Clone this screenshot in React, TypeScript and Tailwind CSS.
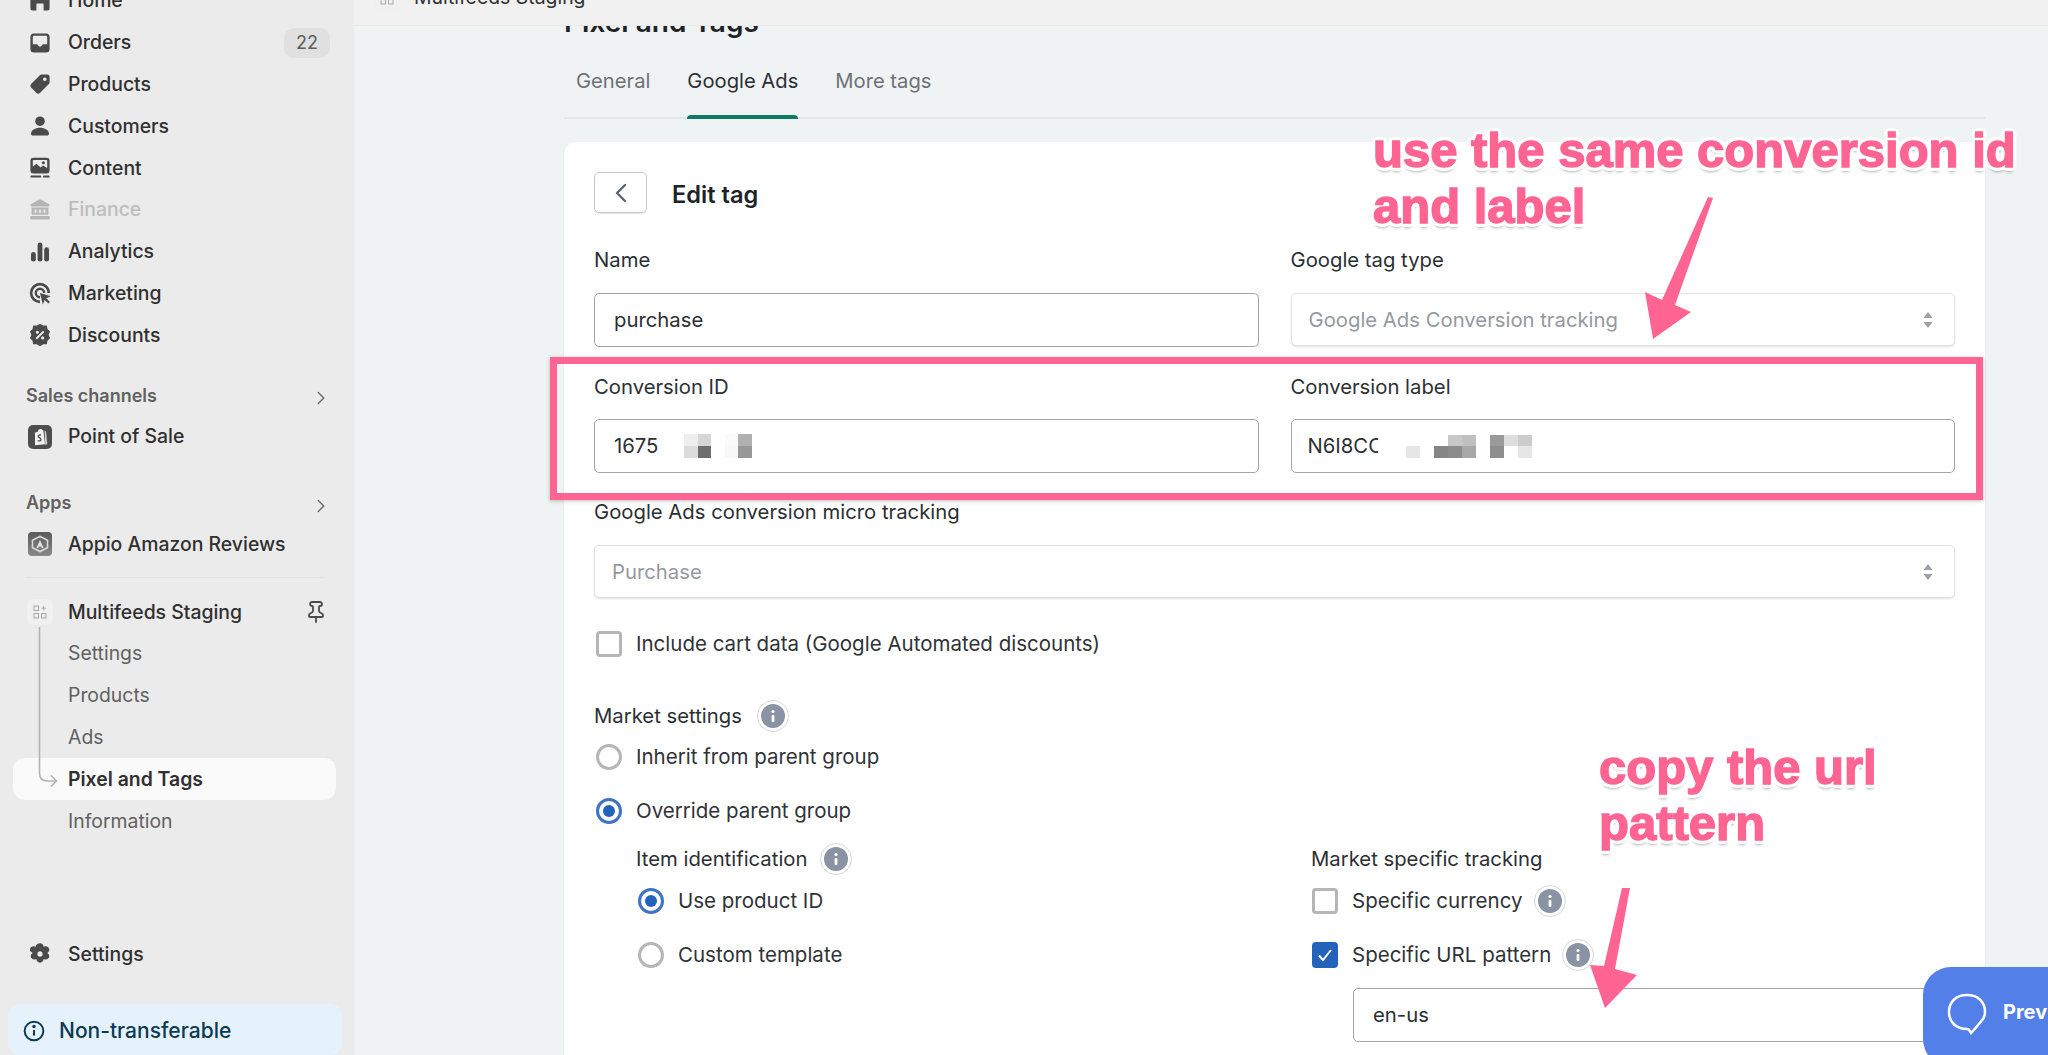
import type { ReactNode } from "react";
import { ChevronRight, Pin } from "lucide-react";

const ink = "#4a4a4a";

function Ico({ children, color = ink }: { children: ReactNode; color?: string }) {
  return (
    <svg viewBox="0 0 20 20" width="24" height="24" fill={color} className="shrink-0" aria-hidden="true">
      {children}
    </svg>
  );
}

function HomeIcon() {
  return (
    <Ico>
      <path d="M9 1.6a1.6 1.6 0 0 1 2 0l6.4 5a1.6 1.6 0 0 1 .6 1.3v8.6a1.5 1.5 0 0 1-1.5 1.5H13v-5a1 1 0 0 0-1-1H8a1 1 0 0 0-1 1v5H3.500A1.500 1.500 0 0 1 2 16.500V7.900a1.600 1.600 0 0 1 .6-1.300z" />
    </Ico>
  );
}

function OrdersIcon() {
  return (
    <Ico>
      <path
        fillRule="evenodd"
        d="M5 2h10a3 3 0 0 1 3 3v10a3 3 0 0 1-3 3H5a3 3 0 0 1-3-3V5a3 3 0 0 1 3-3zm-1 9h3.200c.5 0 .9.300 1 .7.200.700.900 1.300 1.800 1.300s1.600-.6 1.800-1.300c.1-.4.500-.7 1-.7H16V5a1 1 0 0 0-1-1H5a1 1 0 0 0-1 1z"
      />
    </Ico>
  );
}

function TagIcon() {
  return (
    <Ico>
      <path
        fillRule="evenodd"
        d="M11.500 2H16a2 2 0 0 1 2 2v4.500a2 2 0 0 1-.6 1.400l-7.500 7.500a2 2 0 0 1-2.800 0l-4.500-4.500a2 2 0 0 1 0-2.800l7.500-7.500A2 2 0 0 1 11.500 2zM14 7.500a1.500 1.500 0 1 0 0-3 1.500 1.500 0 0 0 0 3z"
      />
    </Ico>
  );
}

function PersonIcon() {
  return (
    <Ico>
      <circle cx="10" cy="6" r="4" />
      <path d="M2.500 16.500C2.500 13.500 6 11.500 10 11.500s7.500 2 7.500 5c0 1-.7 1.500-1.500 1.500H4c-.8 0-1.500-.5-1.500-1.500z" />
    </Ico>
  );
}

function ContentIcon() {
  return (
    <Ico>
      <path
        fillRule="evenodd"
        d="M4.500 1.500h11a2.500 2.500 0 0 1 2.500 2.500v8a2.500 2.500 0 0 1-2.500 2.500h-11A2.500 2.500 0 0 1 2 12V4a2.500 2.500 0 0 1 2.500-2.500zM4 4v5l3-2.500 3.500 3 2-1.500L16 10V4a.6.6 0 0 0-.6-.6H4.600A.6.6 0 0 0 4 4z"
      />
      <circle cx="12.800" cy="5.600" r="1.300" />
      <rect x="2" y="16.300" width="9" height="1.700" rx=".8" />
      <rect x="12.500" y="16.300" width="5.500" height="1.700" rx=".8" />
    </Ico>
  );
}

function BankIcon() {
  return (
    <Ico color="#b6b6b6">
      <path d="M9 1.500a2 2 0 0 1 2 0l6.500 3.600c.9.500.5 1.900-.5 1.900H3c-1 0-1.400-1.400-.5-1.900z" />
      <path
        fillRule="evenodd"
        d="M3 8h14v6H3zm2.500 1.500v3H7v-3zm3.700 0v3h1.600v-3zm3.800 0v3h1.500v-3z"
      />
      <rect x="1.800" y="15" width="16.400" height="3" rx="1" />
    </Ico>
  );
}

function BarsIcon() {
  return (
    <Ico>
      <rect x="2.500" y="10" width="4" height="8" rx="2" />
      <rect x="8" y="2" width="4" height="16" rx="2" />
      <rect x="13.500" y="6" width="4" height="12" rx="2" />
    </Ico>
  );
}

function MarketingIcon() {
  return (
    <Ico>
      <path d="M10 1.500a8.500 8.500 0 0 1 8.500 8.500h-2.200A6.300 6.300 0 1 0 10 16.300v2.200a8.500 8.500 0 0 1 0-17z" />
      <path d="M10 5.500A4.500 4.500 0 0 1 14.500 10h-2A2.500 2.500 0 1 0 10 12.500v2a4.500 4.500 0 0 1 0-9z" />
      <path d="M10 10l9 2.800-3.700 1.600 3 3-1.400 1.400-3-3-1.600 3.700z" />
    </Ico>
  );
}

function DiscountIcon() {
  return (
    <Ico>
      <path
        fillRule="evenodd"
        d="M10 .6l2.700 1.500 3-.1.500 3 2.200 2.100-1.200 2.800 1.200 2.800-2.200 2.100-.5 3-3-.1L10 19.400l-2.700-1.700-3 .1-.5-3-2.200-2.100 1.200-2.800-1.200-2.800 2.200-2.100.5-3 3 .1zM12.500 6.400l-6.200 6.100 1.200 1.200 6.200-6.200zM7.800 6.400a1.300 1.300 0 1 0 0 2.600 1.300 1.300 0 0 0 0-2.600zm4.400 4.700a1.300 1.300 0 1 0 0 2.600 1.300 1.300 0 0 0 0-2.600z"
      />
    </Ico>
  );
}

function GearIcon() {
  return (
    <Ico>
      <path
        fillRule="evenodd"
        d="M10 1c1.700 0 3 1.300 3 2.900l.1.100 1.100-.4c1.500-.3 3 .5 3.400 2 .4 1.300-.1 2.500-1.200 3.200l-.4.300.4.200c1.100.7 1.600 2 1.200 3.300-.4 1.400-1.900 2.300-3.400 1.900l-1.100-.4-.1.100c0 1.700-1.300 3-3 3s-3-1.300-3-3l-.1-.1-1.100.4c-1.500.4-3-.5-3.400-1.900-.4-1.300.1-2.600 1.200-3.300l.4-.2-.4-.3C1.800 8.100 1.300 6.900 1.700 5.600c.4-1.500 1.900-2.300 3.400-2l1.100.4.1-.1C6.300 2.300 8.300 1 10 1zm0 6.800a2.200 2.200 0 1 0 0 4.400 2.200 2.200 0 0 0 0-4.400z"
      />
    </Ico>
  );
}

function PosIcon() {
  return (
    <svg viewBox="0 0 24 24" width="24" height="24" className="shrink-0" aria-hidden="true">
      <rect width="24" height="24" rx="5" fill="#4e4e4e" />
      <path d="M7 7.500l2.500-.6C10 5 11 4 12.500 4c.9 0 1.400.4 1.800 1l1 .2 1.700 14-10 1z" fill="#f2f2f2" />
      <path d="M16.500 6l1.500.3 1.300 13-2 .4z" fill="#cfcfcf" />
      <path d="M13.200 10.200c-1.800-.6-3-.1-3 1 0 1.400 2.800 1.500 2.800 3.300 0 1.300-1.500 1.800-3.300 1.100" fill="none" stroke="#4e4e4e" strokeWidth="1.300" />
    </svg>
  );
}

function AppioIcon() {
  return (
    <svg viewBox="0 0 24 24" width="24" height="24" className="shrink-0" aria-hidden="true">
      <defs>
        <linearGradient id="appio" x1="0" y1="0" x2="0" y2="1">
          <stop offset="0" stopColor="#5a5a5a" />
          <stop offset="1" stopColor="#8a8a8a" />
        </linearGradient>
      </defs>
      <rect width="24" height="24" rx="4" fill="url(#appio)" />
      <path d="M12 4.500l7.500 3.700v7.600L12 19.500l-7.500-3.700V8.200z" fill="none" stroke="#d9d9d9" strokeWidth="1.600" />
      <path d="M12 8l3.500 8h-1.800l-.6-1.500h-2.200l-.6 1.500H8.500z" fill="#e4e4e4" />
    </svg>
  );
}

function AppGridIcon() {
  return (
    <span className="flex h-[26px] w-[26px] shrink-0 items-center justify-center rounded-md bg-[#f0f0f0]">
      <svg viewBox="0 0 14 14" width="14" height="14" fill="none" stroke="#a9a9a9" strokeWidth="1" aria-hidden="true">
        <rect x="1" y="1" width="4.500" height="4.500" />
        <rect x="1" y="8.500" width="4.500" height="4.500" />
        <rect x="8.500" y="8.500" width="4.500" height="4.500" />
        <path d="M10.700 1v4.500M8.500 3.200H13" />
      </svg>
    </span>
  );
}

function NavRow({ icon, label, muted, right }: { icon: ReactNode; label: string; muted?: boolean; right?: ReactNode }) {
  return (
    <div className="ml-[13px] mr-[18px] flex h-[41.8px] items-center pl-[15px] pr-[6px]">
      <span className="flex w-[24px] justify-center">{icon}</span>
      <span className={`ml-[16px] flex-1 text-[19.400px] font-medium ${muted ? "text-[#bdbdbd]" : "text-[#303030]"}`}>{label}</span>
      {right}
    </div>
  );
}

function SubRow({ label, active }: { label: string; active?: boolean }) {
  return (
    <div className={`ml-[13px] mr-[18px] flex h-[41.8px] items-center rounded-xl pl-[55px] text-[19.400px] ${active ? "bg-[#fafafa] font-semibold text-[#303030]" : "text-[#616161]"}`}>
      {label}
    </div>
  );
}

function SectionHead({ label }: { label: string }) {
  return (
    <div className="ml-[13px] mr-[18px] flex h-[41.8px] items-center justify-between pl-[13px] pr-[4px] text-[18px] font-semibold text-[#616161]">
      {label}
      <ChevronRight size={22} strokeWidth={1.6} className="translate-y-[3px] text-[#6e6e6e]" />
    </div>
  );
}

function Sidebar() {
  return (
    <aside className="flex w-[354px] shrink-0 flex-col bg-[#ebebeb]">
      <div className="-mt-[20px]">
        <NavRow icon={<HomeIcon />} label="Home" />
        <NavRow
          icon={<OrdersIcon />}
          label="Orders"
          right={<span className="flex h-[30px] w-[46px] items-center justify-center rounded-[10px] bg-[#e0e0e0] text-[18px] text-[#5c5c5c]">22</span>}
        />
        <NavRow icon={<TagIcon />} label="Products" />
        <NavRow icon={<PersonIcon />} label="Customers" />
        <NavRow icon={<ContentIcon />} label="Content" />
        <NavRow icon={<BankIcon />} label="Finance" muted />
        <NavRow icon={<BarsIcon />} label="Analytics" />
        <NavRow icon={<MarketingIcon />} label="Marketing" />
        <NavRow icon={<DiscountIcon />} label="Discounts" />
      </div>
      <div className="mt-[18px]">
        <SectionHead label="Sales channels" />
        <NavRow icon={<PosIcon />} label="Point of Sale" />
      </div>
      <div className="mt-[24px]">
        <SectionHead label="Apps" />
        <NavRow icon={<AppioIcon />} label="Appio Amazon Reviews" />
      </div>
      <div className="ml-[26px] mr-[30px] mt-[12px] h-px bg-[#e3e3e3]" />
      <div className="relative mt-[13px]">
        <NavRow
          icon={<AppGridIcon />}
          label="Multifeeds Staging"
          right={<Pin size={24} strokeWidth={1.8} className="mr-[2px] text-[#4a4a4a]" />}
        />
        <SubRow label="Settings" />
        <SubRow label="Products" />
        <SubRow label="Ads" />
        <SubRow label="Pixel and Tags" active />
        <SubRow label="Information" />
        <svg className="absolute left-0 top-0" width="70" height="200" fill="none" stroke="#b3b3b3" strokeWidth="1.600" aria-hidden="true">
          <path d="M39.500 36V182q0 8 8 8h9" />
          <path d="M51 184.500l5.500 5.500-5.500 5.500" />
        </svg>
      </div>
      <div className="mt-[91.500px]">
        <NavRow icon={<GearIcon />} label="Settings" />
      </div>
      <div className="ml-[8px] mr-[12px] mt-[28.500px] flex h-[60px] items-start gap-[14px] rounded-xl bg-[#e6f2fb] pl-[15px] pt-[14px] text-[21px] font-medium leading-[26px] text-[#0b3a55]">
        <svg viewBox="0 0 20 20" width="22" height="22" fill="none" stroke="#0b3a55" strokeWidth="1.800" className="mt-[2px]" aria-hidden="true">
          <circle cx="10" cy="10" r="8.500" />
          <path d="M10 9v5" />
          <circle cx="10" cy="6" r=".7" fill="#0b3a55" />
        </svg>
        Non-transferable
      </div>
    </aside>
  );
}

function FieldLabel({ children, className = "" }: { children: ReactNode; className?: string }) {
  return <div className={`text-[20.300px] leading-6 text-[#2b2f33] ${className}`}>{children}</div>;
}

function TextBox({ children, className = "" }: { children: ReactNode; className?: string }) {
  return (
    <div className={`flex h-[54px] items-center rounded-[5px] border border-[#a3a6a8] bg-white pl-[19px] text-[20.300px] text-[#2b2f33] ${className}`}>
      {children}
    </div>
  );
}

function SelectBox({ label, className = "" }: { label: string; className?: string }) {
  return (
    <div className={`flex h-[53px] items-center justify-between rounded-[5px] border border-[#dfe3e6] bg-white pl-[17px] pr-[20px] text-[20.300px] text-[#93999f] shadow-[0_1px_2px_rgba(0,0,0,0.12)] ${className}`}>
      <span className="pt-[2px]">{label}</span>
      <svg width="12" height="18" viewBox="0 0 12 18" fill="#9aa1a9" aria-hidden="true">
        <path d="M6 1l4.500 6h-9zM6 17l-4.500-6h9z" />
      </svg>
    </div>
  );
}

function InfoDot() {
  return (
    <span className="flex h-8 w-8 shrink-0 items-center justify-center rounded-full border border-[#d8d8d8] bg-white">
      <span className="flex h-6 w-6 items-center justify-center rounded-full bg-[#8993a4]">
        <svg width="4" height="14" viewBox="0 0 4 14" fill="#fff" aria-hidden="true">
          <circle cx="2" cy="2.500" r="1.600" />
          <rect x=".6" y="6" width="2.800" height="7" rx="1" />
        </svg>
      </span>
    </span>
  );
}

function Radio({ checked, label }: { checked?: boolean; label: string }) {
  return (
    <div className="flex h-[26px] items-center gap-[14px] text-[20.500px] text-[#2f3337]">
      <span className={`flex h-[26px] w-[26px] items-center justify-center rounded-full border-[3px] bg-white ${checked ? "border-[#3f74c4]" : "border-[#b6b6b6]"}`}>
        {checked ? <span className="h-3 w-3 rounded-full bg-[#2463bc]" /> : null}
      </span>
      {label}
    </div>
  );
}

function Checkbox({ checked, label, info }: { checked?: boolean; label: string; info?: boolean }) {
  return (
    <div className="flex h-[26px] items-center gap-[14px] text-[20.500px] text-[#2f3337]">
      <span className={`flex h-[26px] w-[26px] items-center justify-center rounded-[4px] ${checked ? "bg-[#2463bc]" : "border-[3px] border-[#b6b6b6] bg-white"}`}>
        {checked ? (
          <svg width="16" height="14" viewBox="0 0 16 14" fill="none" stroke="#fff" strokeWidth="2" aria-hidden="true">
            <path d="M2 7.500l4 4.500 8-10" />
          </svg>
        ) : null}
      </span>
      {label}
      {info ? <span className="-ml-[3px]"><InfoDot /></span> : null}
    </div>
  );
}

const firstMosaic = [
  ["bg-[#eeeeee]", "bg-[#dcdcdc]"],
  ["bg-[#d6d6d6]", "bg-[#6e6e6e]"],
  ["bg-white", "bg-white"],
  ["bg-[#fafafa]", "bg-[#f8f8f8]"],
  ["bg-[#b0b0b0]", "bg-[#989898]"],
];

const secondMosaic = [
  ["bg-white", "bg-[#e6e6e6]"],
  ["bg-white", "bg-white"],
  ["bg-white", "bg-[#858585]"],
  ["bg-[#c8c8c8]", "bg-[#8c8c8c]"],
  ["bg-[#c0c0c0]", "bg-[#a8a8a8]"],
  ["bg-white", "bg-white"],
  ["bg-[#9a9a9a]", "bg-[#8e8e8e]"],
  ["bg-[#dedede]", "bg-white"],
  ["bg-[#cccccc]", "bg-[#e6e6e6]"],
];

function Mosaic({ cols, cell }: { cols: string[][]; cell: string }) {
  return (
    <span className="flex">
      {cols.map((col, i) => (
        <span key={i} className="flex flex-col">
          {col.map((c, j) => (
            <span key={j} className={`${cell} ${c}`} />
          ))}
        </span>
      ))}
    </span>
  );
}

function EditCard() {
  return (
    <section className="mt-[23px] rounded-t-xl bg-white px-[30px] pb-10 pt-[30px] shadow-[0_1px_2px_rgba(0,0,0,0.08)]">
      <div className="flex items-center gap-[25px]">
        <span className="flex h-[41px] w-[53px] items-center justify-center rounded-[5px] border border-[#c4c8cc] shadow-[0_1px_1px_rgba(0,0,0,0.1)]">
          <svg width="14" height="20" viewBox="0 0 14 20" fill="none" stroke="#5c6670" strokeWidth="2.400" strokeLinecap="round" strokeLinejoin="round" aria-hidden="true">
            <path d="M11 2L3 10l8 8" />
          </svg>
        </span>
        <h2 className="translate-y-[2px] text-[23.600px] font-semibold text-[#202326]">Edit tag</h2>
      </div>

      <div className="mt-[35px] grid grid-cols-2 gap-x-[32px]">
        <div>
          <FieldLabel>Name</FieldLabel>
          <TextBox className="mt-[21px]">purchase</TextBox>
        </div>
        <div>
          <FieldLabel>Google tag type</FieldLabel>
          <SelectBox label="Google Ads Conversion tracking" className="mt-[21px]" />
        </div>
        <div className="mt-[28px]">
          <FieldLabel>Conversion ID</FieldLabel>
          <TextBox className="mt-[20px]">
            <span className="w-[70px]">1675</span>
            <Mosaic cols={firstMosaic} cell="block h-[12px] w-[13.500px]" />
          </TextBox>
        </div>
        <div className="mt-[28px]">
          <FieldLabel>Conversion label</FieldLabel>
          <TextBox className="mt-[20px] !pl-[16px]">
            <span className="w-[70px] overflow-hidden whitespace-nowrap">N6I8CC</span>
            <span className="ml-[28px]">
              <Mosaic cols={secondMosaic} cell="block h-[11.500px] w-[14px]" />
            </span>
          </TextBox>
        </div>
      </div>

      <FieldLabel className="mt-[27px]">Google Ads conversion micro tracking</FieldLabel>
      <SelectBox label="Purchase" className="mt-[21px]" />

      <div className="ml-[2px] mt-[33px]">
        <Checkbox label="Include cart data (Google Automated discounts)" />
      </div>

      <div className="mt-[43px] flex h-8 items-center gap-[15px]">
        <FieldLabel>Market settings</FieldLabel>
        <InfoDot />
      </div>
      <div className="ml-[2px] mt-[12px]">
        <Radio label="Inherit from parent group" />
      </div>
      <div className="ml-[2px] mt-[28px]">
        <Radio checked label="Override parent group" />
      </div>

      <div className="mt-[19px] flex pl-[42px]">
        <div className="w-[675px]">
          <div className="flex h-8 items-center gap-[13px]">
            <FieldLabel>Item identification</FieldLabel>
            <InfoDot />
          </div>
          <div className="ml-[2px] mt-[13px]">
            <Radio checked label="Use product ID" />
          </div>
          <div className="ml-[2px] mt-[28px]">
            <Radio label="Custom template" />
          </div>
        </div>
        <div className="flex-1">
          <div className="flex h-8 items-center">
            <FieldLabel>Market specific tracking</FieldLabel>
          </div>
          <div className="ml-[1px] mt-[13px]">
            <Checkbox label="Specific currency" info />
          </div>
          <div className="ml-[1px] mt-[28px]">
            <Checkbox checked label="Specific URL pattern" info />
          </div>
          <TextBox className="ml-[42px] mt-[20px]">en-us</TextBox>
        </div>
      </div>
    </section>
  );
}

function Note({ lines, className }: { lines: string[]; className: string }) {
  return (
    <div className={`absolute font-['Liberation_Sans',Arial,sans-serif] text-[49px] font-bold leading-[56px] whitespace-nowrap text-[#ff6492] [-webkit-text-stroke:1.500px_#ff6492] [text-shadow:4px_0_0_#fff,-4px_0_0_#fff,0_4px_0_#fff,0_-4px_0_#fff,3px_3px_0_#fff,-3px_3px_0_#fff,3px_-3px_0_#fff,-3px_-3px_0_#fff,0_5px_3px_rgba(0,0,0,0.3)] ${className}`}>
      {lines.map((line) => (
        <div key={line}>{line}</div>
      ))}
    </div>
  );
}

export default function App() {
  return (
    <div className="relative flex h-[1055px] w-[2048px] overflow-hidden bg-[#f0f3f4] font-['Inter','Liberation_Sans',sans-serif]">
      <Sidebar />
      <main className="flex min-w-0 flex-1 flex-col">
        <header className="relative z-10 h-[26px] shrink-0 overflow-hidden border-b border-[#e8e8e8] bg-[#f1f1f1] pl-[20px]">
          <div className="-mt-[17px] flex items-center gap-[14px] text-[19.400px] text-[#303030]">
            <AppGridIcon />
            Multifeeds Staging
          </div>
        </header>
        <div className="pl-[210px] pr-[63px]">
          <h1 className="-mt-[20px] text-[28px] font-semibold leading-8 text-[#202326]">Pixel and Tags</h1>
          <nav className="mt-[31px] flex h-[50px] gap-[37px] border-b-2 border-[#e3e6e8] pl-[12px] text-[20.200px] leading-6 text-[#6d7175]">
            <span>General</span>
            <span className="relative text-[#2b2f33]">
              Google Ads
              <span className="absolute bottom-[-2px] left-0 h-[4px] w-full rounded-t bg-[#0d7a61]" />
            </span>
            <span>More tags</span>
          </nav>
          <EditCard />
        </div>
      </main>

      <div className="absolute left-[550px] top-[357px] h-[143px] w-[1433px] border-[7px] border-[#ff6492] shadow-[0_1px_4px_rgba(0,0,0,0.25)]" />

      <svg className="absolute left-0 top-0" width="2048" height="1055" fill="#ff6492" style={{ pointerEvents: "none" }} aria-hidden="true">
        <path d="M1713 198L1675 305 1691 312 1653 339 1645 292 1662 300 1708 197z" />
        <path d="M1630 888L1615 969 1637 975 1605 1008 1590 965 1604 966 1622 888z" />
      </svg>

      <Note lines={["use the same conversion id", "and label"]} className="left-[1373px] top-[122px]" />
      <Note lines={["copy the url", "pattern"]} className="left-[1599px] top-[739px]" />

      <div className="absolute left-[1923px] top-[967px] flex h-[100px] w-[160px] items-start gap-[16px] rounded-[28px] bg-[#527fe8] pl-[24px] pt-[25px] text-[20px] font-bold text-white">
        <svg width="40" height="56" viewBox="0 0 40 56" fill="none" stroke="#fff" strokeWidth="2.500" aria-hidden="true">
          <path d="M20 3C9 3 2 10 2 20s7 17 18 17c1.500 0 2 .5 2.500 1.500L24 41c3-3 8-9 12-14 2-3 2-5 2-7C38 10 31 3 20 3z" />
        </svg>
        <span className="mt-[5px]">Preview</span>
      </div>
    </div>
  );
}
